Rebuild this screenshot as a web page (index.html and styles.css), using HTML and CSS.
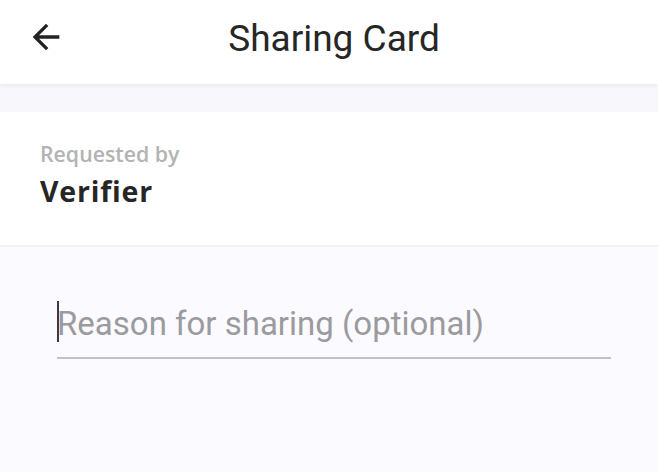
FILE: index.html
```html
<!DOCTYPE html>
<html>
<head>
<meta charset="utf-8">
<link rel="stylesheet" href="styles.css">
</head>
<body>
<div class="app">
  <header class="topbar">
    <button class="back" aria-label="Back">
      <svg viewBox="0 0 24 24" width="40" height="40"><path d="M20 11H7.83l5.59-5.59L12 4l-8 8 8 8 1.41-1.41L7.83 13H20v-2z" fill="#222"/></svg>
    </button>
    <h1 class="title">Sharing Card</h1>
  </header>
  <div class="gap"></div>
  <section class="card">
    <div class="label">Requested by</div>
    <div class="value">Verifier</div>
  </section>
  <section class="form">
    <div class="field">
      <span class="caret"></span>
      <span class="placeholder">Reason for sharing (optional)</span>
    </div>
  </section>
</div>
</body>
</html>
```
FILE: styles.css
```css
* { box-sizing: border-box; }
html, body { margin: 0; padding: 0; }
body { width: 658px; height: 472px; overflow: hidden; background: #fbfafe; font-family: Roboto, "Liberation Sans", sans-serif; }
.app { display: flex; flex-direction: column; height: 100%; }
.topbar { height: 84px; background: #fff; display: flex; align-items: center; position: relative; box-shadow: 0 2px 4px rgba(0,0,0,0.06); z-index: 1; }
.back { position: absolute; left: 26px; top: 17px; width: 40px; height: 40px; padding: 0; border: 0; background: none; display: flex; }
.title { margin: 0 auto; font-size: 37px; line-height: 44px; font-weight: 400; color: #262626; padding-bottom: 6px; transform: translateX(5px); }
.gap { height: 28px; background: #f8f7fb; }
.card { background: #fff; height: 135px; padding: 28px 40px 0; border-bottom: 2px solid #f3f2f6; }
.label { font-family: "Open Sans", sans-serif; font-weight: 600; font-size: 21.3px; line-height: 28px; color: #b3b3b3; }
.value { font-family: "Open Sans", sans-serif; font-weight: 700; font-size: 28.5px; line-height: 38px; color: #262626; margin-top: 4px; letter-spacing: 0.8px; }
.form { padding: 52px 46px 0 57px; }
.field { height: 60px; border-bottom: 2px solid #c2c1c6; display: flex; align-items: flex-start; position: relative; width: 554px; }
.caret { position: absolute; left: 0; top: 2px; width: 2px; height: 41px; background: #3b3652; }
.placeholder { font-size: 33px; color: #9b9a9f; line-height: 44px; padding-top: 3px; }
```
